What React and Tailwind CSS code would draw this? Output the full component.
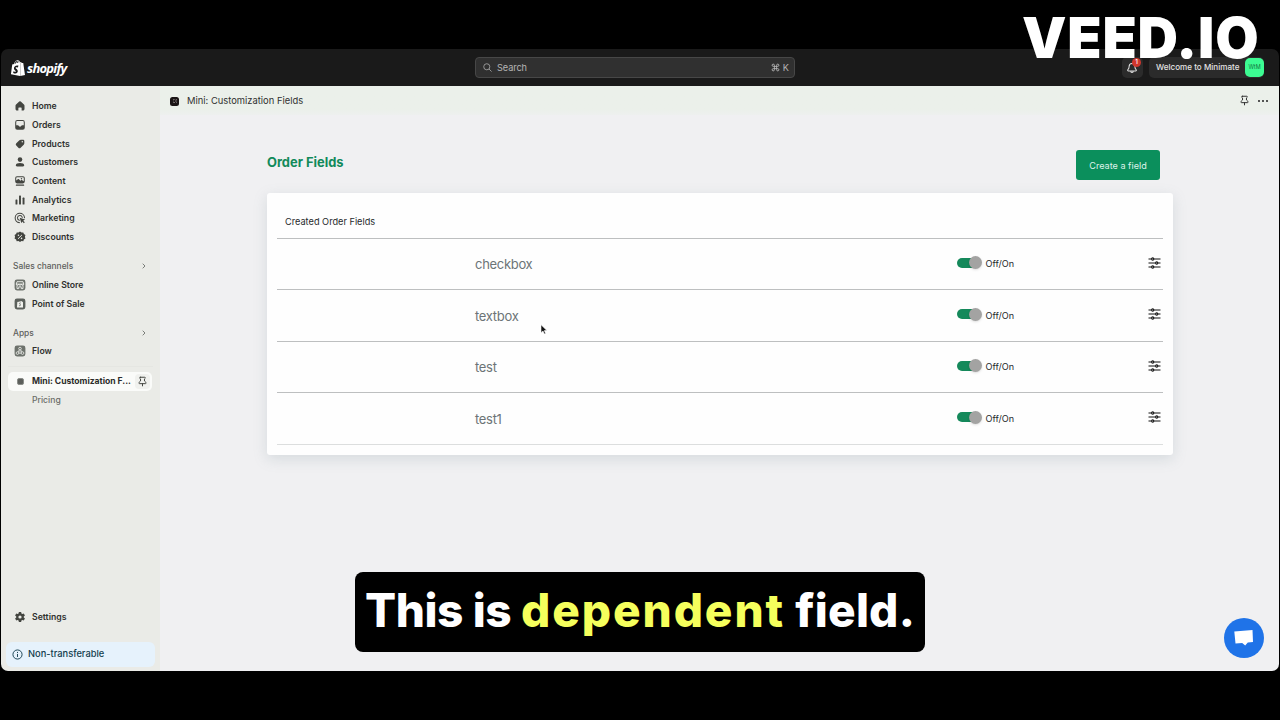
import React from 'react';
import { SiShopify } from 'react-icons/si';

const HomeIcon = () => (
    <path fillRule="evenodd" d="M8.700 2.700a2 2 0 0 1 2.600 0l5.300 4.800c.6.500.9 1.200.9 2v5.500c0 1.400-1.100 2.500-2.500 2.500h-2.300v-4a1 1 0 0 0-1-1h-3.400a1 1 0 0 0-1 1v4H5c-1.400 0-2.500-1.100-2.500-2.500V9.500c0-.8.3-1.500.9-2z" />
);
const OrdersIcon = () => (
    <path fillRule="evenodd" d="M5.500 1.800h9a3.500 3.500 0 0 1 3.500 3.500v9.200a3.500 3.500 0 0 1-3.500 3.500h-9A3.500 3.500 0 0 1 2 14.500V5.300a3.500 3.500 0 0 1 3.500-3.500zm0 1.700c-1 0-1.800.7-1.800 1.800v5h3c.5 0 .8.3 1 .8.300.9.9 1.400 2.300 1.400s2-.5 2.300-1.400c.2-.5.500-.8 1-.8h3v-5c0-1.100-.8-1.800-1.800-1.800z" />
);
const TagIcon = () => (
    <path fillRule="evenodd" d="M11.500 3h3.800A1.900 1.900 0 0 1 17.200 4.900v3.800c0 .9-.3 1.700-1 2.400l-5.100 5.100a2.700 2.700 0 0 1-3.800 0l-3.500-3.500a2.700 2.700 0 0 1 0-3.800L9 3.900A3.500 3.500 0 0 1 11.500 3zm2.300 4.600a1.200 1.200 0 1 0 0-2.400 1.200 1.200 0 0 0 0 2.400z" />
);
const PersonIcon = () => (
    <>
        <circle cx="10" cy="6" r="3.800" />
        <path d="M3 15.500c0-2.700 3-4 7-4s7 1.300 7 4c0 1.200-.8 2-2 2H5c-1.200 0-2-.8-2-2z" />
    </>
);
const ContentIcon = () => (
    <>
        <path fillRule="evenodd" d="M5 2h10a3 3 0 0 1 3 3v6a3 3 0 0 1-3 3H5a3 3 0 0 1-3-3V5a3 3 0 0 1 3-3zm0 1.700c-.8 0-1.300.5-1.300 1.300v4.200l2.600-2.300c.6-.5 1.300-.5 1.900 0l2.600 2.600 1-.8c.6-.5 1.300-.5 1.900 0l2.600 1.800V5c0-.8-.5-1.300-1.300-1.300z" />
        <circle cx="12.500" cy="6.300" r="1.200" />
        <rect x="3" y="16" width="14" height="1.800" rx=".9" />
    </>
);
const AnalyticsIcon = () => (
    <>
        <rect x="2.500" y="9" width="3.200" height="8.500" rx="1" />
        <rect x="8.400" y="2.500" width="3.200" height="15" rx="1" />
        <rect x="14.300" y="6" width="3.200" height="11.500" rx="1" />
    </>
);
const MarketingIcon = () => (
    <>
        <g fill="none" stroke="currentColor" strokeWidth="1.700" strokeLinecap="round">
            <path d="M17.500 9.500A7.800 7.800 0 1 0 9 17.700" />
            <path d="M13.700 9A4 4 0 1 0 9 13.800" />
        </g>
        <path d="M9.500 9.500l9 3.200-3.200 1.700 2.700 2.700-1.500 1.500-2.700-2.700-1.500 3z" />
    </>
);
const DiscountIcon = () => (
    <>
        <path d="M10 .8l2.500 1.700 3-.2 1 2.900 2.600 1.500-.9 2.900.9 2.900-2.600 1.500-1 2.900-3-.2L10 18.400l-2.500-1.700-3 .2-1-2.900-2.600-1.500.9-2.900-.9-2.900 2.600-1.500 1-2.900 3 .2z" />
        <path d="M7.200 12.600l5.600-5.600" stroke="#eaebe7" strokeWidth="1.600" strokeLinecap="round" />
        <circle cx="7.400" cy="7.200" r="1.300" fill="#eaebe7" />
        <circle cx="12.600" cy="12.300" r="1.300" fill="#eaebe7" />
    </>
);
const StoreIcon = () => (
    <>
        <rect x="1" y="1" width="18" height="18" rx="4" fill="#6d726c" />
        <g fill="none" stroke="#f1f2ee" strokeWidth="1.500">
            <path d="M5 4.500h10l1.300 4H3.700z" />
            <path d="M3.700 8.500c0 2.500 4.200 2.500 4.200 0 0 2.500 4.200 2.500 4.200 0 0 2.500 4.200 2.500 4.200 0M5 10.500V16h3v-3h4v3h3v-5.500" />
        </g>
    </>
);
const PosIcon = () => (
    <>
        <rect x="1" y="1" width="18" height="18" rx="4" fill="#5c615c" />
        <path d="M5.500 6.500l7-1.500 2.500 2v9h-10z" fill="#f1f2ee" />
        <path d="M11.300 8.300c-2-.8-3 .8-1.500 1.900 2 1.300.9 3.400-1.500 2.500M8 6c0-3 3-3 3.300-.5" fill="none" stroke="#5c615c" strokeWidth="1.300" />
    </>
);
const FlowIcon = () => (
    <>
        <rect x="1" y="1" width="18" height="18" rx="4" fill="#6d726c" />
        <g fill="none" stroke="#f1f2ee" strokeWidth="1.300">
            <circle cx="10" cy="6" r="2.200" />
            <circle cx="5.800" cy="13.500" r="2.200" />
            <circle cx="14.200" cy="13.500" r="2.200" />
            <path d="M9 8l-2.300 3.700M11 8l2.300 3.700M8 13.500h4M10 9v3" />
        </g>
    </>
);
const SettingsIcon = () => (
    <path fillRule="evenodd" d="M8.100 1.500h3.800l.5 2.500 1.500.9 2.400-.8 1.900 3.200-1.900 1.700v2l1.900 1.700-1.900 3.200-2.400-.8-1.500.9-.5 2.500H8.100l-.5-2.500-1.500-.9-2.400.8-1.900-3.200L3.700 11V9L1.800 7.300l1.900-3.200 2.400.8L7.600 4zM10 7.300a2.700 2.700 0 1 0 0 5.400 2.700 2.700 0 0 0 0-5.400z" />
);

const Icon = ({ children, className = 'size-3' }) => (
    <svg viewBox="0 0 20 20" fill="currentColor" className={`shrink-0 ${className}`}>{children}</svg>
);

const PinIcon = ({ className }) => (
    <svg viewBox="0 0 20 20" fill="none" stroke="currentColor" strokeWidth="1.800" strokeLinejoin="round" strokeLinecap="round" className={className}>
        <path d="M6 2.300h8c1.300 0 1.600 1.400.8 2.100l-1.200 1.100v3.600l2.600 2.500c.9.900.4 2.300-.8 2.300H4.600c-1.200 0-1.700-1.400-.8-2.300l2.600-2.500V5.500L5.200 4.400c-.8-.7-.5-2.100.8-2.100zM10 14v4" />
    </svg>
);

const Chevron = () => (
    <svg viewBox="0 0 8 8" fill="none" stroke="#7b7e7a" strokeWidth="1" className="size-2">
        <path d="M2.700 1.700L5 4 2.700 6.300" />
    </svg>
);

const SlidersIcon = () => (
    <svg viewBox="0 0 13 12" fill="none" stroke="#111" strokeWidth="1.100" className="h-3 w-[13px]">
        <path d="M.5 2h3M6 2h6.500M.5 6h7M10 6h2.500M.5 10h3M6 10h6.500" />
        <circle cx="4.700" cy="2" r="1.100" />
        <circle cx="8.700" cy="6" r="1.100" />
        <circle cx="4.700" cy="10" r="1.100" />
    </svg>
);

const NavItem = ({ icon, label }) => (
    <a className="flex h-[18.7px] items-center gap-[6px] pl-[13px]">
        <Icon>{icon}</Icon>
        <span className="pt-px text-[8.7px] font-semibold text-[#30312f]">{label}</span>
    </a>
);

const NavHeading = ({ label }) => (
    <div className="mt-[10.5px] flex h-[18.7px] items-center justify-between pr-[12px] pl-[12px] text-[8.4px] font-medium text-[#5d605c]">
        <span className="pt-[0.5px]">{label}</span>
        <Chevron />
    </div>
);

const mainNav = [
    { label: 'Home', icon: <HomeIcon /> },
    { label: 'Orders', icon: <OrdersIcon /> },
    { label: 'Products', icon: <TagIcon /> },
    { label: 'Customers', icon: <PersonIcon /> },
    { label: 'Content', icon: <ContentIcon /> },
    { label: 'Analytics', icon: <AnalyticsIcon /> },
    { label: 'Marketing', icon: <MarketingIcon /> },
    { label: 'Discounts', icon: <DiscountIcon /> },
];

const fields = ['checkbox', 'textbox', 'test', 'test1'];

const TopBar = () => (
    <header className="flex h-[37px] shrink-0 items-center bg-[#1a1a1a]">
        <div className="flex w-[474px] items-center gap-px pl-[9px] text-white">
            <SiShopify className="size-4" />
            <span className="font-['Open_Sans'] text-[13px] leading-4 font-bold tracking-[-0.75px] italic">shopify</span>
        </div>
        <div className="flex h-[21px] w-[320px] items-center rounded-[4px] border border-[#474747] bg-[#303030] pr-[5px] pl-[7px] text-[#b5b5b5]">
            <svg viewBox="0 0 10 10" fill="none" stroke="#a0a0a0" strokeWidth="1" className="mr-[5px] size-[9px]">
                <circle cx="4.200" cy="4.200" r="3.400" />
                <path d="M6.700 6.700L9.500 9.500" />
            </svg>
            <span className="text-[9.200px] tracking-[-0.1px]">Search</span>
            <span className="ml-auto flex items-center gap-[3px] text-[9.200px]">
                <svg viewBox="0 0 24 24" fill="none" stroke="currentColor" strokeWidth="2.400" className="size-[9px]">
                    <path d="M15 6v12a3 3 0 1 0 3-3H6a3 3 0 1 0 3 3V6a3 3 0 1 0-3 3h12a3 3 0 1 0-3-3" />
                </svg>
                <span>K</span>
            </span>
        </div>
        <div className="ml-auto flex items-center gap-[6px] pr-[15px]">
            <div className="relative flex size-[21px] items-center justify-center rounded-[5px] bg-[#2b2b2b]">
                <svg viewBox="0 0 20 20" fill="none" stroke="#e3e3e3" strokeWidth="1.700" strokeLinejoin="round" className="mr-px size-3">
                    <path d="M10 2.500c-3 0-4.800 2.200-4.800 5 0 3-.7 4-2 5.200-.9.900-.4 2.300.9 2.300h11.800c1.300 0 1.800-1.400.9-2.300-1.300-1.200-2-2.200-2-5.200 0-2.800-1.800-5-4.800-5zM7.800 15.200c0 3 4.400 3 4.400 0" />
                </svg>
                <span className="absolute top-[1px] left-[10px] flex size-[9px] items-center justify-center rounded-full bg-[#d0362d] text-[6.500px] font-medium text-white">1</span>
            </div>
            <div className="flex h-[21px] items-center rounded-[5px] bg-[#2b2b2b] pl-[7px] font-medium text-[#e3e3e3]">
                <span className="w-[89px] text-[8.1px] whitespace-nowrap">Welcome to Minimate</span>
                <span className="flex size-[19px] items-center justify-center rounded-[5px] bg-[#3cfb92] text-[5.500px] font-normal text-[#13753f]">WtM</span>
            </div>
        </div>
    </header>
);

const Sidebar = () => (
    <nav className="flex w-[159px] shrink-0 flex-col bg-[#eaebe7] pt-[10.9px] text-[#434540]">
        {mainNav.map((item) => (
            <NavItem key={item.label} {...item} />
        ))}
        <NavHeading label="Sales channels" />
        <NavItem icon={<StoreIcon />} label="Online Store" />
        <NavItem icon={<PosIcon />} label="Point of Sale" />
        <NavHeading label="Apps" />
        <NavItem icon={<FlowIcon />} label="Flow" />
        <div className="mx-[7px] mt-[5px] border-t border-[#e5e6e2]" />
        <div className="mt-[5px] mr-2 ml-[7px] flex h-[19px] items-center rounded-[5px] bg-[#fafbf9] pl-[9px]">
            <span className="size-[7px] rounded-[2px] border border-[#8b8e8a] bg-[#5c5f5b]" />
            <span className="ml-[8px] pt-[0.5px] text-[8.600px] font-bold tracking-[-0.02px] whitespace-nowrap text-[#2b2c2a]">Mini: Customization F...</span>
            <span className="mr-[2px] ml-auto flex size-[15px] items-center justify-center rounded-[4px] bg-[#f0f1ee]">
                <PinIcon className="size-[11px]" />
            </span>
        </div>
        <a className="flex h-[18.7px] items-center pt-px pl-[31px] text-[8.600px] font-medium text-[#6a6d69]">Pricing</a>
        <div className="mt-auto">
            <NavItem icon={<SettingsIcon />} label="Settings" />
        </div>
        <div className="mt-[16px] mr-[5px] mb-[4px] ml-[5px] flex h-[25px] items-center gap-[5px] rounded-[6px] bg-[#e6f2fc] pl-[6px] text-[9.3px] font-medium text-[#123c4c]">
            <svg viewBox="0 0 20 20" fill="none" stroke="currentColor" strokeWidth="1.700" className="size-[11px]">
                <circle cx="10" cy="10" r="8.300" />
                <path d="M10 9v5.500M10 5.300v2" />
            </svg>
            <span className="pb-px">Non-transferable</span>
        </div>
    </nav>
);

const Toggle = () => (
    <div className="relative flex h-[14px] w-[25px] items-center">
        <div className="h-[10px] w-[23px] rounded-full bg-[#15895b]" />
        <div className="absolute right-0 size-[13px] rounded-full bg-[#a3a3a2] shadow-sm" />
    </div>
);

const FieldRow = ({ name }) => (
    <div className="flex h-[51.45px] items-center border-b border-[#bdbfc0] last:border-[#dcdede]">
        <span className="w-[680px] pt-[2px] pl-[198px] text-[13px] tracking-[-0.3px] text-[#6c7477]">{name}</span>
        <div className="-mt-[2.5px]">
            <Toggle />
        </div>
        <span className="ml-[3.5px] text-[9.1px] text-[#26292b]">Off/On</span>
        <div className="mr-[2px] -mt-[3px] ml-auto">
            <SlidersIcon />
        </div>
    </div>
);

const App = () => {
    return (
        <div className="relative h-[720px] w-[1280px] overflow-hidden bg-black px-px pt-[49px] font-['Inter',sans-serif]">
            <div className="flex h-[622px] flex-col overflow-hidden rounded-[7px]">
                <TopBar />
                <div className="flex min-h-0 flex-1">
                    <Sidebar />
                    <main className="flex-1 bg-[#f0f0f2]">
                        <div className="flex h-[29px] items-center bg-linear-to-b from-[#ebf0ea] from-80% to-[#eef0ef] pr-[10px] pl-[10px] text-[#303030]">
                            <span className="mt-px flex size-[9px] items-center justify-center rounded-[2.500px] bg-[#1b1516]">
                                <svg viewBox="0 0 8 8" fill="none" stroke="#b9aeb0" strokeWidth=".8" className="size-[6px]">
                                    <path d="M1.500 2h2M5 2h1.500M1.500 4h1M4 4h2.500M1.500 6h2.500M5.500 6h1" />
                                </svg>
                            </span>
                            <span className="ml-[8px] pt-px text-[9.4px]">Mini: Customization Fields</span>
                            <PinIcon className="mr-[7px] ml-auto size-[11px]" />
                            <svg viewBox="0 0 12 4" fill="currentColor" className="mt-px h-1 w-3">
                                <circle cx="2" cy="2" r="1.100" />
                                <circle cx="6" cy="2" r="1.100" />
                                <circle cx="10" cy="2" r="1.100" />
                            </svg>
                        </div>
                        <div className="mr-[106px] ml-[107px]">
                            <div className="flex items-start justify-between pt-[35px] pr-[13px]">
                                <h1 className="pt-[5px] text-[12.9px] leading-4 font-bold text-[#128a5b]">Order Fields</h1>
                                <button className="h-[30px] w-[84px] rounded-[3px] bg-[#0b8f5c] pt-px text-[9.1px] text-[#dff3ea]">Create a field</button>
                            </div>
                            <section className="mt-[13px] h-[262px] rounded-[3px] bg-[#fefefe] px-[10px] shadow-[0_4px_14px_rgba(120,140,150,0.22)]">
                                <div className="flex h-[46px] items-end border-b border-[#bdbfc0] pb-[9px] pl-[8px] text-[9.2px] text-[#26292b]">
                                    Created Order Fields
                                </div>
                                <div>
                                    {fields.map((name) => (
                                        <FieldRow key={name} name={name} />
                                    ))}
                                </div>
                            </section>
                        </div>
                    </main>
                </div>
            </div>

            {/* mouse pointer */}
            <svg viewBox="0 0 8 11" className="absolute top-[324px] left-[540px] h-[11px] w-2">
                <path d="M1 .7v8l2-1.700 1.300 3 1.300-.6-1.300-2.800h2.600z" fill="#111" stroke="#fff" strokeWidth=".6" />
            </svg>

            <button className="absolute top-[618px] left-[1224px] flex size-10 items-center justify-center rounded-full bg-[#1f73e8]">
                <svg viewBox="0 0 20 18" fill="#fff" className="h-[18px] w-5">
                    <path d="M.3 2.500L18.500 1 19 13l-5.200.4-2.600 3.100-3-2.600-6.700.5z" />
                </svg>
            </button>

            <div className="absolute top-[572px] left-[355px] flex h-20 w-[570px] items-center justify-center rounded-lg bg-black pb-[3px] text-[46px] font-extrabold whitespace-pre text-white">
                <span className="tracking-[-0.4px]">This is </span>
                <span className="tracking-[1.9px] text-[#f5ff5c]">dependent</span>
                <span className="tracking-[0.2px]"> field.</span>
            </div>

            <div className="absolute top-[10px] left-[1022px] text-[56px] leading-[57px] font-black tracking-[0.8px] whitespace-nowrap text-white">VEED.IO</div>
        </div>
    );
};

export default App;
